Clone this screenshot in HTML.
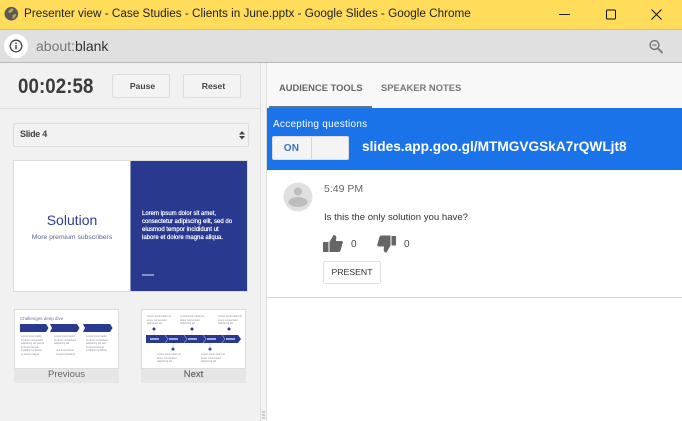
<!DOCTYPE html>
<html><head><meta charset="utf-8"><style>
html,body{margin:0;padding:0;width:682px;height:421px;overflow:hidden;background:#fff}
body{font-family:"Liberation Sans",sans-serif;position:relative}
div,span,svg{position:absolute;box-sizing:border-box;white-space:nowrap}
.b{background:#f3f3f3;border:1px solid #dcdcdc;border-radius:2px;text-align:center;color:#444;font-weight:bold;font-size:8.600px}
.s{font-size:2.500px;color:#8a8a98;line-height:3.500px}
</style></head><body>
<div style="left:0;top:0;width:682px;height:29px;background:#ffdc5a"></div>
<div style="left:0;top:29px;width:682px;height:1px;background:#c9c09a"></div>
<svg style="left:4px;top:6px" width="16" height="16" viewBox="0 0 16 16"><circle cx="7.300" cy="7.700" r="6.800" fill="#5a5a58"/><path d="M7 2.500l2.500.5-1 2.500-2.500 1.500-2-1zM8.500 9l3-1 .8 1-2.300 3.500h-1.500z" fill="#b9a95c"/></svg>
<div style="left:24px;top:6px;font-size:11.720px;line-height:16px;color:#222">Presenter view - Case Studies - Clients in June.pptx - Google Slides - Google Chrome</div>
<svg style="left:555px;top:5px" width="127" height="20" viewBox="0 0 127 20"><path d="M4 9.500h11" stroke="#222" stroke-width="1"/><rect x="51.500" y="5" width="9" height="9" rx="1" fill="none" stroke="#111" stroke-width="1"/><path d="M96.500 4.500l10 10M106.500 4.500l-10 10" stroke="#111" stroke-width="1" fill="none"/></svg>

<div style="left:0;top:30px;width:682px;height:32px;background:#e0e0e0"></div>
<div style="left:0;top:62px;width:682px;height:1px;background:#b8b8b8"></div>
<div style="left:4px;top:34px;width:24px;height:24px;border-radius:12px;background:#fff"></div>
<svg style="left:9px;top:39px" width="14" height="14" viewBox="0 0 14 14"><circle cx="7" cy="7" r="5.800" fill="none" stroke="#444" stroke-width="1.300"/><path d="M7 6v4.200M7 3.500v1.500" stroke="#444" stroke-width="1.500"/></svg>
<div style="left:36px;top:38px;font-size:14px;line-height:17px;color:#777">about:<span style="position:static;color:#333">blank</span></div>
<svg style="left:647px;top:38px" width="18" height="17" viewBox="0 0 18 17"><circle cx="7.500" cy="7" r="4.400" fill="none" stroke="#777" stroke-width="1.500"/><path d="M5.300 7h4.400" stroke="#777" stroke-width="1.200"/><path d="M11 10.500l4.500 4.500" stroke="#777" stroke-width="1.800"/></svg>

<div style="left:0;top:63px;width:260px;height:358px;background:#f1f1f1"></div>
<div style="left:260px;top:63px;width:1px;height:358px;background:#dcdcdc"></div>
<div style="left:261px;top:63px;width:5px;height:358px;background:#f4f4f4"></div>
<div style="left:266px;top:63px;width:1px;height:358px;background:#dcdcdc"></div>
<div style="left:262px;top:411px;width:3px;height:2px;background:#ccc"></div>
<div style="left:262px;top:414px;width:3px;height:2px;background:#ccc"></div>
<div style="left:262px;top:417px;width:3px;height:2px;background:#ccc"></div>
<div style="left:0;top:108px;width:260px;height:1px;background:#dcdcdc"></div>

<div style="left:18px;top:74px;font-size:21px;line-height:25px;font-weight:bold;color:#3c3c3c;transform:scaleX(.89);transform-origin:0 0;letter-spacing:.1px">00:02:58</div>
<div class="b" style="left:112px;top:74px;width:58px;height:24px;line-height:20px;padding:1px 0 0 3px">Pause</div>
<div class="b" style="left:183px;top:74px;width:58px;height:24px;line-height:20px;padding:1px 0 0 3px">Reset</div>

<div class="b" style="left:13px;top:123px;width:236px;height:24px;background:#f2f2f2;text-align:left;line-height:20px;padding-left:6px;font-size:9px;letter-spacing:-.3px;color:#444">Slide 4</div>
<svg style="left:238px;top:130px" width="8" height="11" viewBox="0 0 8 11"><path d="M1 4.500L4 1l3 3.500zM1 6h6L4 9.500z" fill="#444"/></svg>

<div style="left:13px;top:160px;width:235px;height:132px;background:#fff;border:1px solid #dcdcdc"></div>
<div style="left:130px;top:161px;width:117px;height:130px;background:#2a3990"></div>
<div style="left:130px;top:161px;width:1px;height:130px;background:#8f97c4"></div>
<div style="left:14px;top:211px;width:116px;text-align:center;font-size:14px;line-height:18px;color:#2f3d96">Solution</div>
<div style="left:14px;top:232px;width:116px;text-align:center;font-size:6.800px;line-height:11px;color:#5a6290">More premium subscribers</div>
<div style="left:142px;top:210px;font-size:6px;line-height:8px;color:#fff;-webkit-text-stroke:.2px #fff">Lorem ipsum dolor sit amet,<br>consectetur adipiscing elit, sed do<br>eiusmod tempor incididunt ut<br>labore et dolore magna aliqua.</div>
<div style="left:142px;top:274px;width:12px;height:2px;background:#8890c0"></div>

<div style="left:14px;top:309px;width:105px;height:60px;background:#fff;border:1px solid #dcdcdc"></div>
<div style="left:14px;top:369px;width:105px;height:14px;background:#e6e6e6;text-align:center;font-size:9.500px;line-height:12px;color:#666">Previous</div>
<div style="left:20px;top:315px;font-size:4.500px;line-height:7px;color:#6a70a8">Challenges deep dive</div>
<svg style="left:19px;top:323px" width="96" height="10" viewBox="0 0 96 10"><path d="M1 1h26l2.500 4-2.500 4H1zM31 1h27l2.500 4-2.500 4H31l2-4zM64 1h27l2.500 4-2.500 4H64l2-4z" fill="#2a3990"/></svg>
<div class="s" style="left:21px;top:335px">Lorem ipsum dolor<br>sit amet consectetur<br>adipiscing elit sed do<br>eiusmod tempor<br>incididunt ut labore<br>et dolore magna</div>
<div class="s" style="left:54px;top:335px">Lorem ipsum dolor<br>sit amet consectetur<br>adipiscing elit<br>&nbsp;<br>&nbsp;&nbsp;&nbsp;sed do eiusmod<br>&nbsp;&nbsp;&nbsp;tempor incididunt</div>
<div class="s" style="left:86px;top:335px">Lorem ipsum dolor<br>sit amet consectetur<br>adipiscing elit sed<br>eiusmod tempor<br>incididunt ut labore</div>

<div style="left:141px;top:309px;width:105px;height:60px;background:#fff;border:1px solid #dcdcdc"></div>
<div style="left:141px;top:369px;width:105px;height:14px;background:#e6e6e6;text-align:center;font-size:9.500px;line-height:12px;color:#666;-webkit-text-stroke:.2px #666">Next</div>
<svg style="left:141px;top:309px" width="105" height="60" viewBox="0 0 105 60"><path d="M5 26h92l3 4-3 4H5z" fill="#2a3990"/><path d="M24 26l3 4-3 4M43 26l3 4-3 4M62 26l3 4-3 4M81 26l3 4-3 4" fill="none" stroke="#8f97c4" stroke-width=".7"/><g fill="#2a3990"><circle cx="13" cy="20" r="1.500"/><circle cx="51" cy="20" r="1.500"/><circle cx="88" cy="20" r="1.500"/><circle cx="32" cy="40" r="1.500"/><circle cx="69" cy="40" r="1.500"/></g><path d="M13 21v5M51 21v5M88 21v5M32 34v6M69 34v6" stroke="#b9bcd8" stroke-width=".5"/><path d="M9 30h9M28 30h9M47 30h9M66 30h9M85 30h9" stroke="#c8cce6" stroke-width="1.500"/></svg>
<div class="s" style="left:147px;top:315px">Lorem ipsum dolor sit<br>amet, consectetur<br>adipiscing elit</div>
<div class="s" style="left:180px;top:315px">Lorem ipsum dolor sit<br>amet, consectetur<br>adipiscing elit</div>
<div class="s" style="left:218px;top:315px">Lorem ipsum dolor sit<br>amet, consectetur<br>adipiscing elit</div>
<div class="s" style="left:157px;top:353px">Lorem ipsum dolor sit<br>amet, consectetur<br>adipiscing elit</div>
<div class="s" style="left:201px;top:353px">Lorem ipsum dolor sit<br>amet, consectetur<br>adipiscing elit</div>

<div style="left:267px;top:63px;width:415px;height:45px;background:#f8f8f8"></div>
<div style="left:279px;top:81px;font-size:9.400px;line-height:13px;font-weight:bold;color:#666">AUDIENCE TOOLS</div>
<div style="left:381px;top:81px;font-size:9.400px;line-height:13px;font-weight:bold;color:#777">SPEAKER NOTES</div>
<div style="left:269px;top:106px;width:103px;height:2px;background:#5f7382"></div>
<div style="left:267px;top:108px;width:415px;height:62px;background:#1a73e8"></div>
<div style="left:273px;top:118px;font-size:10px;line-height:13px;color:#fff;letter-spacing:.26px">Accepting questions</div>
<div style="left:272px;top:136px;width:77px;height:24px;background:#f4f4f4;border:1px solid #dcdcdc;border-radius:2px"></div>
<div style="left:311px;top:137px;width:1px;height:22px;background:#d5d5d5"></div>
<div style="left:272px;top:137px;width:39px;height:24px;text-align:center;font-size:10px;line-height:24px;font-weight:bold;color:#3b6fd4;letter-spacing:.3px">ON</div>
<div style="left:362px;top:138px;font-size:13.700px;line-height:18px;font-weight:bold;color:#fff">slides.app.goo.gl/MTMGVGSkA7rQWLjt8</div>

<svg style="left:283px;top:182px" width="30" height="30" viewBox="0 0 30 30"><circle cx="15" cy="15" r="14.500" fill="#e0e0e0"/><circle cx="15" cy="9.500" r="4" fill="#bdbdbd"/><ellipse cx="15" cy="20" rx="9.500" ry="5" fill="#bdbdbd"/></svg>
<div style="left:324px;top:182px;font-size:10.500px;line-height:14px;color:#666">5:49 PM</div>
<div style="left:324px;top:209px;font-size:9.600px;line-height:14px;color:#333;padding-top:2px">Is this the only solution you have?</div>
<svg style="left:323px;top:234px" width="20" height="19" viewBox="0 0 20 19"><path d="M0 8h5.500v10H0zM6.500 8l4-7c1.500 0 2.800 1 2.800 2.500L13 7h5.500c1 0 1.500 1 1.200 2L17.500 16.500c-.3 1-1 1.500-2 1.500h-9z" fill="#666"/></svg>
<div style="left:351px;top:238px;font-size:10px;line-height:14px;color:#444">0</div>
<svg style="left:376px;top:234px" width="20" height="19" viewBox="0 0 20 19"><path d="M20 11.500h-4.500V2H20zM14.500 11.500l-4 7c-1.500 0-2.800-1-2.800-2.500l.3-3.500H2.500c-1 0-1.500-1-1.200-2L3.500 3c.3-1 1-1.500 2-1.500h9z" fill="#666"/></svg>
<div style="left:404px;top:238px;font-size:10px;line-height:14px;color:#444">0</div>
<div style="left:323px;top:261px;width:58px;height:23px;background:#fff;border:1px solid #e0e0e0;border-radius:2px;text-align:center;font-size:8.700px;line-height:21px;color:#333">PRESENT</div>
<div style="left:267px;top:297px;width:415px;height:1px;background:#d5d5d5"></div>
</body></html>
